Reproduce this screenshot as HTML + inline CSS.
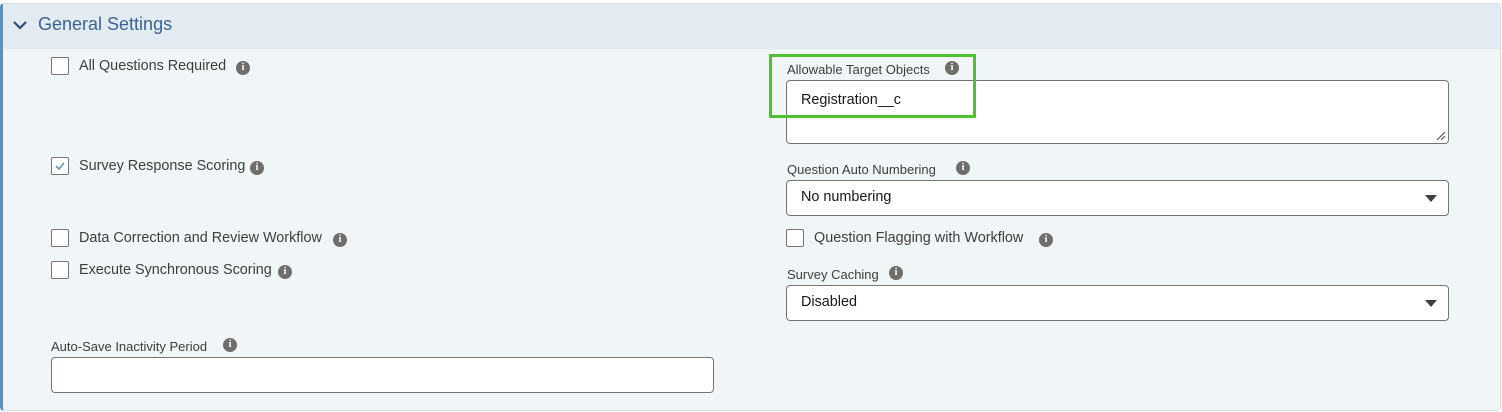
<!DOCTYPE html>
<html><head><style>
*{box-sizing:border-box;margin:0;padding:0}
body{width:1502px;height:412px;background:#fff;font-family:"Liberation Sans",sans-serif;position:relative;overflow:hidden;color:#3e3e3c}
.panel{position:absolute;left:0;top:3px;width:1501px;height:408px;background:#f0f5f8;border:1px solid #d8dde6;border-left:3px solid #5b93b8;border-radius:4px}
.hdr{position:absolute;left:0;top:0;right:0;height:45px;background:#e3ebf2;border-radius:0 4px 0 0}
.hdr span{position:absolute;left:35px;top:10px;font-size:18px;color:#3a6290}
.a{position:absolute}
.cb{position:absolute;width:18px;height:18px;background:#fff;border:1px solid #747474;border-radius:2px}
.t{position:absolute;font-size:14.4px;color:#3e3e3c;white-space:nowrap}
.l{position:absolute;font-size:13px;color:#3e3e3c;white-space:nowrap}
.i{position:absolute;width:14px;height:14px;border-radius:50%;background:#706e6b;color:#fff;font-size:10px;font-weight:bold;text-align:center;line-height:14px;font-family:"Liberation Serif",serif}
.inp{position:absolute;background:#fff;border:1px solid #747474;border-radius:4px}
.v{position:absolute;font-size:14.4px;color:#181818;white-space:nowrap}
.tri{position:absolute;width:0;height:0;border-left:6px solid transparent;border-right:6px solid transparent;border-top:7px solid #3e3e3c}
</style></head><body>
<div class="panel"><div class="hdr"><span>General Settings</span></div></div>
<svg class="a" style="left:12px;top:19px" width="16" height="12"><path d="M2 3 L8 9 L14 3" stroke="#2a4d7a" stroke-width="2.2" fill="none"/></svg>

<div class="cb" style="left:51px;top:57px"></div><div class="t" style="left:79px;top:58px">All Questions Required</div><div class="i" style="left:236px;top:61px">i</div>
<div class="cb" style="left:51px;top:157px"></div><svg class="a" style="left:54px;top:161px" width="12" height="10"><path d="M2 5 L5 8 L10 2" stroke="#5b93b8" stroke-width="1.6" fill="none"/></svg>
<div class="t" style="left:79px;top:158px">Survey Response Scoring</div><div class="i" style="left:250px;top:161px">i</div>
<div class="cb" style="left:51px;top:229px"></div><div class="t" style="left:79px;top:230px">Data Correction and Review Workflow</div><div class="i" style="left:333px;top:233px">i</div>
<div class="cb" style="left:51px;top:261px"></div><div class="t" style="left:79px;top:262px">Execute Synchronous Scoring</div><div class="i" style="left:278px;top:265px">i</div>
<div class="l" style="left:51px;top:339px">Auto-Save Inactivity Period</div><div class="i" style="left:223px;top:338px">i</div>
<div class="inp" style="left:51px;top:357px;width:663px;height:36px"></div>

<div class="l" style="left:787px;top:62px">Allowable Target Objects</div><div class="i" style="left:945px;top:61px">i</div>
<div class="inp" style="left:786px;top:80px;width:663px;height:64px"></div>
<svg class="a" style="left:1436px;top:131px" width="10" height="10"><path d="M1 9 L9 1 M5 9 L9 5" stroke="#555" stroke-width="1.2"/></svg>
<div class="v" style="left:801px;top:92px">Registration__c</div>
<div class="a" style="left:769px;top:54px;width:207px;height:64px;border:3px solid #4fc12e"></div>

<div class="l" style="left:787px;top:162px">Question Auto Numbering</div><div class="i" style="left:956px;top:161px">i</div>
<div class="inp" style="left:786px;top:180px;width:663px;height:36px"></div>
<div class="v" style="left:801px;top:189px">No numbering</div><div class="tri" style="left:1425px;top:195px"></div>

<div class="cb" style="left:786px;top:229px"></div><div class="t" style="left:814px;top:230px">Question Flagging with Workflow</div><div class="i" style="left:1039px;top:233px">i</div>

<div class="l" style="left:787px;top:267px">Survey Caching</div><div class="i" style="left:889px;top:266px">i</div>
<div class="inp" style="left:786px;top:285px;width:663px;height:36px"></div>
<div class="v" style="left:801px;top:294px">Disabled</div><div class="tri" style="left:1425px;top:300px"></div>
</body></html>
